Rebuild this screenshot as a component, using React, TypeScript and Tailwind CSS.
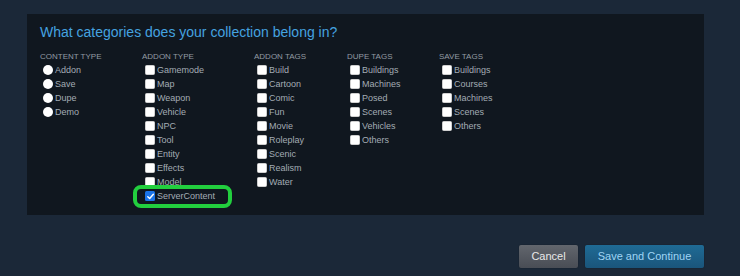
import React from "react";

const columns: { title: string; kind: "radio" | "check"; items: string[]; w: string }[] = [
  { title: "Content Type", kind: "radio", items: ["Addon", "Save", "Dupe", "Demo"], w: "w-[102px]" },
  {
    title: "Addon Type",
    kind: "check",
    items: ["Gamemode", "Map", "Weapon", "Vehicle", "NPC", "Tool", "Entity", "Effects", "Model", "ServerContent"],
    w: "w-[112px]",
  },
  {
    title: "Addon Tags",
    kind: "check",
    items: ["Build", "Cartoon", "Comic", "Fun", "Movie", "Roleplay", "Scenic", "Realism", "Water"],
    w: "w-[93px]",
  },
  { title: "Dupe Tags", kind: "check", items: ["Buildings", "Machines", "Posed", "Scenes", "Vehicles", "Others"], w: "w-[92px]" },
  { title: "Save Tags", kind: "check", items: ["Buildings", "Courses", "Machines", "Scenes", "Others"], w: "w-[100px]" },
];

function Box({ checked }: { checked?: boolean }) {
  if (checked) {
    return (
      <span className="ml-[3px] flex h-[10px] w-[10px] items-center justify-center rounded-[1.5px] bg-[#1a73e8]">
        <svg viewBox="0 0 10 10" className="h-[9px] w-[9px]">
          <path d="M2 5.2 L4.1 7.3 L8.2 2.6" fill="none" stroke="#fff" strokeWidth="1.6" strokeLinecap="round" strokeLinejoin="round" />
        </svg>
      </span>
    );
  }
  return <span className="ml-[3px] block h-[10px] w-[10px] rounded-[1.5px] border border-[#d0d0d0] bg-white" />;
}

function Radio() {
  return <span className="ml-[3px] block h-[10px] w-[10px] rounded-full bg-white" />;
}

export default function App() {
  return (
    <div
      className="h-[276px] w-[740px] overflow-hidden bg-[#1b2838] pt-[14px]"
      style={{ fontFamily: '"Liberation Sans", Arial, sans-serif' }}
    >
      <div className="ml-[27px] h-[201px] w-[677px] bg-[#10171f] pl-[13px] pt-[10px]">
        <div className="h-[16px] text-[14px] leading-[16px] text-[#45a3e0]">What categories does your collection belong in?</div>
        <div className="mt-[11px] flex">
          {columns.map((col) => (
            <div key={col.title} className={col.w}>
              <div className="h-[12px] text-[8px] uppercase leading-[12px] text-[#929ba3]">{col.title}</div>
              {col.items.map((it) => (
                <div key={it} className="relative flex h-[14px] items-center text-[9px] leading-[14px] text-[#a3acb4]">
                  {col.kind === "radio" ? <Radio /> : <Box checked={it === "ServerContent"} />}
                  <span className="ml-[2px]">{it}</span>
                  {it === "ServerContent" && (
                    <span className="absolute left-[-9px] top-[-4px] h-[23px] w-[99px] rounded-[8px] border-[4px] border-[#22cf3e]" />
                  )}
                </div>
              ))}
            </div>
          ))}
        </div>
      </div>
      <div className="mt-[30px] flex justify-end gap-[7px] pr-[36px]">
        <button className="h-[23px] w-[59px] rounded-[2px] bg-gradient-to-b from-[#62666d] to-[#494d55] text-[11px] text-[#e8e8e8] shadow-[0_0_1px_rgba(0,0,0,0.6)]">
          Cancel
        </button>
        <button className="h-[23px] w-[119px] rounded-[2px] bg-gradient-to-b from-[#1f6b95] to-[#1a557b] text-[11px] text-[#9fd5f5] shadow-[0_0_1px_rgba(0,0,0,0.6)]">
          Save and Continue
        </button>
      </div>
    </div>
  );
}
